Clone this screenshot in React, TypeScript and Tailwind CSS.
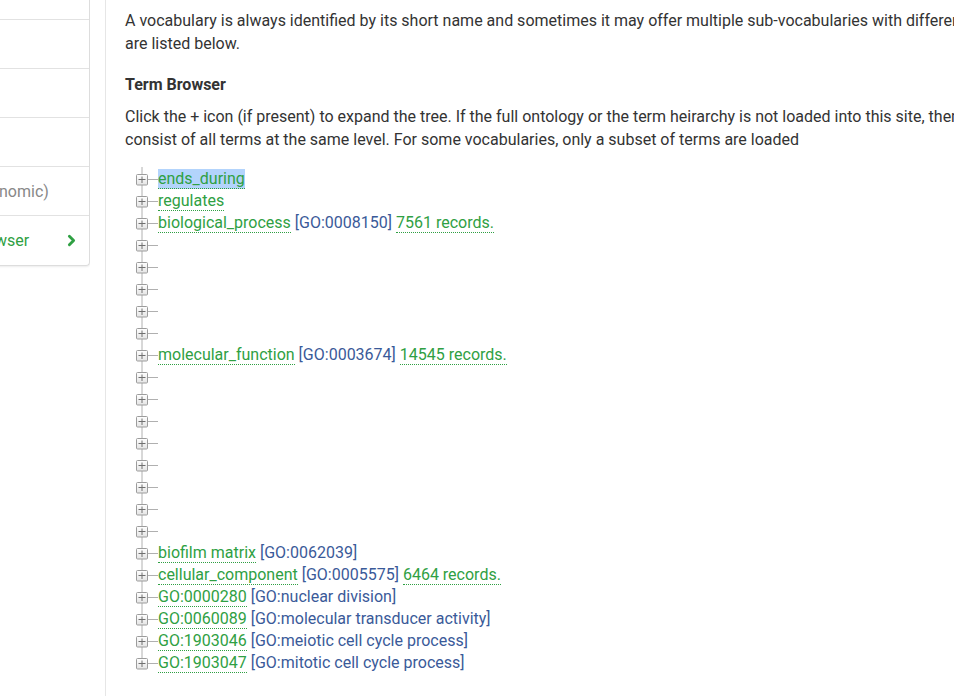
import { ChevronRight } from "lucide-react";

type Node = {
  name?: string;
  id?: string;
  records?: string;
  selected?: boolean;
};

const nodes: Node[] = [
  { name: "ends_during", selected: true },
  { name: "regulates" },
  { name: "biological_process", id: "GO:0008150", records: "7561 records." },
  {},
  {},
  {},
  {},
  {},
  { name: "molecular_function", id: "GO:0003674", records: "14545 records." },
  {},
  {},
  {},
  {},
  {},
  {},
  {},
  {},
  { name: "biofilm matrix", id: "GO:0062039" },
  { name: "cellular_component", id: "GO:0005575", records: "6464 records." },
  { name: "GO:0000280", id: "GO:nuclear division" },
  { name: "GO:0060089", id: "GO:molecular transducer activity" },
  { name: "GO:1903046", id: "GO:meiotic cell cycle process" },
  { name: "GO:1903047", id: "GO:mitotic cell cycle process" },
];

const sideItems = [
  { label: "Details", active: false },
  { label: "About", active: false },
  { label: "Terms", active: false },
  { label: "Full (Taxonomic)", active: false },
  { label: "Term Browser", active: true },
];

const Expander = ({ last }: { last: boolean }) => (
  <svg width="28" height="22" viewBox="0 0 28 22" className="shrink-0">
    <defs>
      <linearGradient id="box" x1="0" y1="0" x2="0" y2="1">
        <stop offset="0" stopColor="#ffffff" />
        <stop offset="1" stopColor="#e4e4e4" />
      </linearGradient>
    </defs>
    <line x1="12" y1="0" x2="12" y2={last ? 7 : 22} stroke="#b0b0b0" strokeWidth="1" />
    <line x1="17.5" y1="12.5" x2="28" y2="12.5" stroke="#b0b0b0" strokeWidth="1" />
    <rect x="6.5" y="7.5" width="11" height="10.5" rx="1" fill="url(#box)" stroke="#9c9c9c" />
    <line x1="8.5" y1="12.5" x2="15.5" y2="12.5" stroke="#707070" />
    <line x1="12" y1="9.5" x2="12" y2="16" stroke="#707070" />
  </svg>
);

const TreeRow = ({ node, last }: { node: Node; last: boolean }) => (
  <li className="flex h-[22px] items-center">
    <Expander last={last} />
    {node.name && (
      <span className="whitespace-nowrap">
        <span
          className={`border-b border-dotted border-[#2fa043] text-[#2fa043] ${
            node.selected ? "bg-[#b3d4fc]" : ""
          }`}
        >
          {node.name}
        </span>
        {node.id && <span className="text-[#3a5a99]"> [{node.id}]</span>}
        {node.records && (
          <>
            {" "}
            <span className="border-b border-dotted border-[#2fa043] text-[#2fa043]">
              {node.records}
            </span>
          </>
        )}
      </span>
    )}
  </li>
);

export default function App() {
  return (
    <div
      className="flex h-[696px] w-[954px] overflow-hidden bg-white text-[16px] leading-[23px] text-[#333]"
      style={{ fontFamily: "Roboto, 'Liberation Sans', sans-serif" }}
    >
      <aside className="w-[90px] shrink-0 overflow-hidden">
        <div className="ml-[-85px] w-[175px] rounded-br-[4px] border-r border-b border-[#ddd] shadow-[0_1px_2px_rgba(0,0,0,0.08)]">
          <div className="h-[20px] border-b border-[#e2e2e2]" />
          {sideItems.map((item, i) => (
            <div
              key={item.label}
              className={`flex h-[49px] items-center justify-between pl-[15px] pr-[9px] whitespace-nowrap ${
                i < sideItems.length - 1 ? "border-b border-[#e2e2e2]" : ""
              }`}
            >
              <span className={item.active ? "text-[#2fa043]" : "text-[#888]"}>
                {item.label}
              </span>
              {item.active && (
                <ChevronRight size={17} strokeWidth={4} className="shrink-0 text-[#2fa043]" />
              )}
            </div>
          ))}
        </div>
      </aside>

      <main className="ml-[15px] flex-1 border-l border-[#e6e6e6] pl-[19px] pt-[9px]">
        <div className="w-[1000px]">
          <p className="whitespace-nowrap">
            A vocabulary is always identified by its short name and sometimes it may offer multiple
            sub-vocabularies with different short names. Both are used in this site and
            <br />
            are listed below.
          </p>

          <h3 className="mt-[18px] font-bold">Term Browser</h3>

          <p className="mt-[9px] whitespace-nowrap">
            Click the + icon (if present) to expand the tree. If the full ontology or the term
            heirarchy is not loaded into this site, then the tree will
            <br />
            consist of all terms at the same level. For some vocabularies, only a subset of terms are
            loaded
          </p>

          <ul className="mt-[16px] ml-[5px]">
            {nodes.map((node, i) => (
              <TreeRow key={i} node={node} last={i === nodes.length - 1} />
            ))}
          </ul>
        </div>
      </main>
    </div>
  );
}
